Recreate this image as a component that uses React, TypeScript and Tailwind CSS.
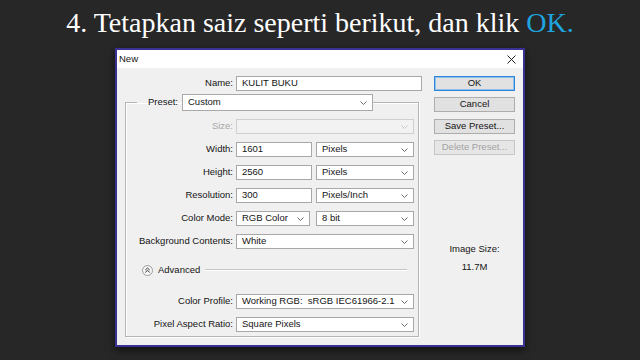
import React from "react";

const Chevron = ({ light = false }: { light?: boolean }) => (
  <svg width="7" height="4" viewBox="0 0 7 4" className="shrink-0">
    <polyline
      points="0.5,0.5 3.5,3.5 6.5,0.5"
      fill="none"
      stroke={light ? "#c8c8c8" : "#6e6e6e"}
      strokeWidth="1"
    />
  </svg>
);

const Select = ({
  value,
  className,
  disabled = false,
}: {
  value: string;
  className: string;
  disabled?: boolean;
}) => (
  <div
    className={
      "flex items-center justify-between pl-[5px] pr-[5px] border whitespace-pre " +
      (disabled
        ? "bg-[#f2f2f2] border-[#cfcfcf] "
        : "bg-white border-[#a8a8a8] ") +
      className
    }
  >
    <span>{value}</span>
    <Chevron light={disabled} />
  </div>
);

const Input = ({ value, className }: { value: string; className: string }) => (
  <div
    className={
      "flex items-center pl-[5px] bg-white border border-[#a8a8a8] " + className
    }
  >
    {value}
  </div>
);

const Row = ({
  label,
  children,
  className = "",
  disabled = false,
}: {
  label: string;
  children: React.ReactNode;
  className?: string;
  disabled?: boolean;
}) => (
  <div className={"flex items-center h-[15px] " + className}>
    <div
      className={
        "w-[107px] text-right " + (disabled ? "text-[#a8a8a8]" : "")
      }
    >
      {label}
    </div>
    <div className="ml-[3px] flex items-center">{children}</div>
  </div>
);

const Button = ({
  label,
  className = "",
  primary = false,
  disabled = false,
}: {
  label: string;
  className?: string;
  primary?: boolean;
  disabled?: boolean;
}) => (
  <div
    className={
      "h-[15px] w-[81px] flex items-center justify-center border " +
      (primary
        ? "bg-[#e1e1e1] border-[#2f86d6] shadow-[inset_0_0_0_1px_#8fc0ec] "
        : disabled
        ? "bg-[#e6e6e6] border-[#c6c6c6] text-[#a3a3a3] "
        : "bg-[#e1e1e1] border-[#adadad] ") +
      className
    }
  >
    {label}
  </div>
);

const AdvancedIcon = () => (
  <svg width="11" height="11" viewBox="0 0 11 11" className="shrink-0">
    <circle cx="5.5" cy="5.5" r="5" fill="#f7f7f7" stroke="#9a9a9a" strokeWidth="1" />
    <polyline points="3.3,5 5.5,3 7.7,5" fill="none" stroke="#333" strokeWidth="1" />
    <polyline points="3.3,7.4 5.5,5.4 7.7,7.4" fill="none" stroke="#333" strokeWidth="1" />
  </svg>
);

export default function App() {
  return (
    <div className="w-[640px] h-[360px] bg-[#272727] flex flex-col items-center overflow-hidden">
      <div
        className="h-[48px] flex items-center justify-center text-white text-[28px] leading-none pb-[3px]"
        style={{ fontFamily: '"Liberation Serif", "Times New Roman", serif' }}
      >
        <span>
          4. Tetapkan saiz seperti berikut, dan klik{" "}
          <span className="text-[#1ea4df]">OK.</span>
        </span>
      </div>

      <div
        className="w-[410px] h-[299px] border-2 border-[#3a2f93] bg-[#f0f0f0] flex flex-col text-[9.5px] text-[#141414] shadow-[0_3px_8px_rgba(0,0,0,0.6)]"
        style={{ fontFamily: '"Liberation Sans", Arial, sans-serif' }}
      >
        {/* Title bar */}
        <div className="h-[18px] bg-white flex items-center justify-between pl-[2px] pr-[7px]">
          <span>New</span>
          <svg width="9" height="9" viewBox="0 0 9 9">
            <path d="M0.5 0.5 L8.5 8.5 M8.5 0.5 L0.5 8.5" stroke="#222" strokeWidth="1" />
          </svg>
        </div>

        {/* Body */}
        <div className="flex-1 flex pl-[8px] pr-[8px] pt-[8px]">
          {/* Left column */}
          <div className="w-[297px] flex flex-col">
            <div className="flex items-center h-[15px]">
              <div className="w-[108px] text-right">Name:</div>
              <Input value="KULIT BUKU" className="ml-[3px] w-[186px] h-[15px]" />
            </div>

            <fieldset className="mt-[3px] w-[294px] border border-[#b4b4b4] shadow-[1px_1px_0_#ffffff,inset_1px_1px_0_#ffffff] pb-[4px] pr-[4px]">
              <legend className="ml-[11px] flex items-center h-[17px]">
                <span className="w-[41px] text-right">Preset:</span>
                <Select value="Custom" className="ml-[4px] w-[191px] h-[17px]" />
              </legend>

              <Row label="Size:" className="mt-[8px]" disabled>
                <Select value="" className="w-[178px] h-[15px]" disabled />
              </Row>
              <Row label="Width:" className="mt-[8px]">
                <Input value="1601" className="w-[76px] h-[15px]" />
                <Select value="Pixels" className="ml-[4px] w-[98px] h-[15px]" />
              </Row>
              <Row label="Height:" className="mt-[8px]">
                <Input value="2560" className="w-[76px] h-[15px]" />
                <Select value="Pixels" className="ml-[4px] w-[98px] h-[15px]" />
              </Row>
              <Row label="Resolution:" className="mt-[8px]">
                <Input value="300" className="w-[76px] h-[15px]" />
                <Select value="Pixels/Inch" className="ml-[4px] w-[98px] h-[15px]" />
              </Row>
              <Row label="Color Mode:" className="mt-[8px]">
                <Select value="RGB Color" className="w-[74px] h-[15px]" />
                <Select value="8 bit" className="ml-[6px] w-[98px] h-[15px]" />
              </Row>
              <Row label="Background Contents:" className="mt-[8px]">
                <Select value="White" className="w-[178px] h-[15px]" />
              </Row>

              <div className="mt-[15px] h-[12px] flex items-center pl-[16px] mr-[7px]">
                <AdvancedIcon />
                <span className="ml-[5px]">Advanced</span>
                <div className="ml-[5px] flex-1 h-[2px] border-t border-[#c4c4c4] border-b border-b-white" />
              </div>

              <Row label="Color Profile:" className="mt-[18px]">
                <Select value="Working RGB:  sRGB IEC61966-2.1" className="w-[178px] h-[15px]" />
              </Row>
              <Row label="Pixel Aspect Ratio:" className="mt-[8px]">
                <Select value="Square Pixels" className="w-[178px] h-[15px]" />
              </Row>
            </fieldset>
          </div>

          {/* Right column */}
          <div className="ml-[12px] w-[81px] flex flex-col">
            <Button label="OK" primary />
            <Button label="Cancel" className="mt-[6px]" />
            <Button label="Save Preset..." className="mt-[7px]" />
            <Button label="Delete Preset..." className="mt-[6px]" disabled />
            <div className="mt-[88px] h-[12px] flex items-center justify-center">
              Image Size:
            </div>
            <div className="mt-[6px] h-[12px] flex items-center justify-center">
              11.7M
            </div>
          </div>
        </div>
      </div>
    </div>
  );
}
